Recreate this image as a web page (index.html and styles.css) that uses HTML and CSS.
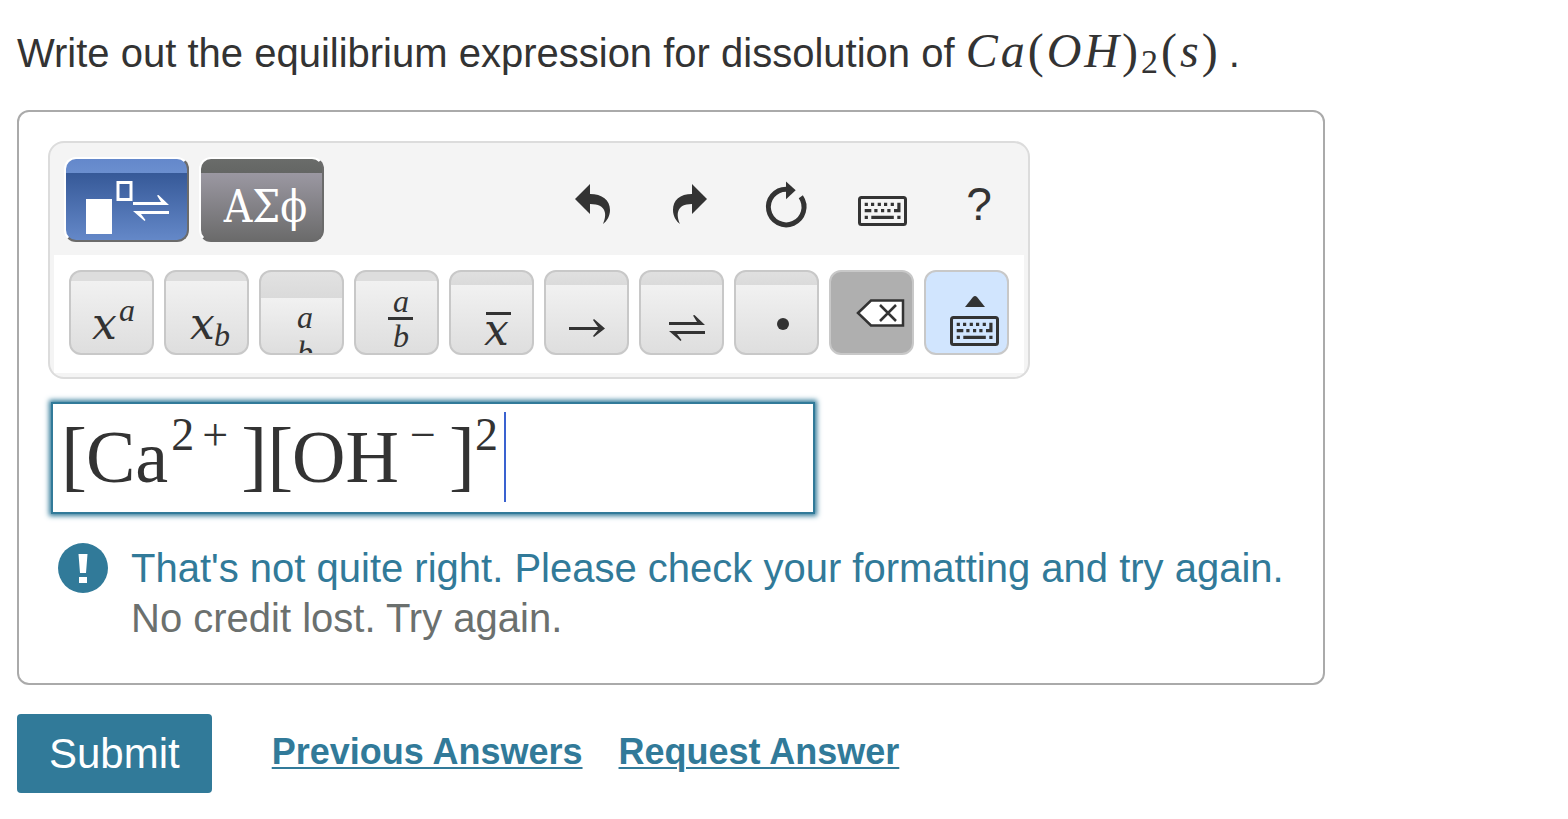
FILE: index.html
```html
<!DOCTYPE html>
<html lang="en">
<head>
    <meta charset="UTF-8">
    <meta name="viewport" content="width=device-width, initial-scale=1.0">
    <title>Equilibrium Expression</title>
    <link rel="stylesheet" href="styles.css">
</head>
<body>
    <!-- shared keyboard icon -->
    <svg class="defs" aria-hidden="true">
        <symbol id="keyboard" viewBox="0 0 49 30">
            <rect x="1.5" y="1.5" width="46" height="27" rx="2" fill="none" stroke="#333" stroke-width="3"/>
            <path fill="#333" d="M6.7 6.7h3.2v3.2h-3.2zM13 6.7h3.2v3.2H13zM19.7 6.7h3.2v3.2h-3.2zM26 6.7h3.2v3.2H26zM32.7 6.7h3.2v3.2h-3.2zM39.3 6.7h3.2v9.6H36v-3.2h3.3zM6.7 13.1h6.6v3.2H6.7zM16.3 13.1h3.2v3.2h-3.2zM23 13.1h3.2v3.2H23zM29.3 13.1h3.2v3.2h-3.2zM6.7 19.7h3.2v3.2H6.7zM13.3 19.7h22.5v3.2H13.3zM39.3 19.7h3.2v3.2h-3.2z"/>
        </symbol>
    </svg>

    <main class="problem">
        <p class="question">Write out the equilibrium expression for dissolution of <span class="formula"><i>C</i><i>a</i><span>(</span><i>O</i><i>H</i><span>)</span><sub>2</sub><span>(</span><i>s</i><span>)</span></span> .</p>

        <form id="answerForm">
            <div class="panel">
                <div class="toolbar">
                    <div class="toolbar-top">
                        <button type="button" class="tab tab-active" aria-label="Templates">
                            <svg viewBox="0 0 121 81">
                                <rect x="20" y="40" width="26" height="35" fill="#fff"/>
                                <rect x="52" y="23.500" width="13" height="17" fill="none" stroke="#fff" stroke-width="3"/>
                                <path fill="#fff" d="M67 46V43H95L91 36.500L92.500 36L103 46zM103 52V55H75L79.500 61L78.500 62L67 52z"/>
                            </svg>
                        </button>
                        <button type="button" class="tab" aria-label="Greek symbols"><span class="greek">ΑΣϕ</span></button>
                        <div class="tools">
                            <button type="button" class="tool" aria-label="Undo">
                                <svg viewBox="-3 0 96 84"><path fill="#333" d="M28 42L43 27V37C55 37 63 43 63 53C63 59 60 64 56 67C60 58 60 47 43 47V57Z"/></svg>
                            </button>
                            <button type="button" class="tool" aria-label="Redo">
                                <svg viewBox="-3 0 96 84"><path fill="#333" d="M64 42L49 27V37C37 37 30 43 30 53C30 59 33 64 37 67C33 58 33 47 49 47V57Z"/></svg>
                            </button>
                            <button type="button" class="tool" aria-label="Reset">
                                <svg viewBox="-3 0 96 84">
                                    <path fill="none" stroke="#333" stroke-width="5" d="M61.800 39.800A17.800 17.800 0 1 1 47.300 32.200"/>
                                    <path fill="#333" d="M47 24.500L56.700 33.300L47 42.300z"/>
                                </svg>
                            </button>
                            <button type="button" class="tool" aria-label="Keyboard shortcuts">
                                <svg viewBox="-3 0 96 84"><use href="#keyboard" x="23" y="39" width="49" height="30"/></svg>
                            </button>
                            <button type="button" class="tool" aria-label="Help"><span class="help">?</span></button>
                        </div>
                    </div>
                    <div class="keys">
                        <button type="button" class="key" aria-label="Superscript">
                            <svg viewBox="0 0 81 81"><text class="big" x="21" y="67">x</text><text class="small" x="48" y="49">a</text></svg>
                        </button>
                        <button type="button" class="key" aria-label="Subscript">
                            <svg viewBox="0 0 81 81"><text class="big" x="24" y="67">x</text><text class="small" x="48" y="74">b</text></svg>
                        </button>
                        <button type="button" class="key key-stack" aria-label="Stacked values">
                            <svg viewBox="0 0 81 81"><text class="small" x="36" y="56">a</text><text class="small" x="36" y="91">b</text></svg>
                        </button>
                        <button type="button" class="key" aria-label="Fraction">
                            <svg viewBox="0 0 81 81"><text class="small" x="37" y="40">a</text><rect x="32" y="45" width="25" height="3" fill="#333"/><text class="small" x="37" y="75">b</text></svg>
                        </button>
                        <button type="button" class="key key-low" aria-label="Overline">
                            <svg viewBox="0 0 81 81"><rect x="35" y="40" width="25" height="3" fill="#333"/><text class="big" x="33" y="73">x</text></svg>
                        </button>
                        <button type="button" class="key key-low" aria-label="Reaction arrow">
                            <svg viewBox="0 0 81 81"><path fill="#333" d="M23 55h29l-5-7 1-1 11 9.500L48 65l-1-1 5-6H23z"/></svg>
                        </button>
                        <button type="button" class="key key-low" aria-label="Equilibrium arrow">
                            <svg viewBox="0 0 81 81"><path fill="#333" d="M28 53V50H56L52 43.500L53.500 43L64 53zM64 59V62H36L40.500 68L39.500 69L28 59z"/></svg>
                        </button>
                        <button type="button" class="key key-low" aria-label="Dot">
                            <svg viewBox="0 0 81 81"><circle cx="47" cy="52" r="6" fill="#333"/></svg>
                        </button>
                        <button type="button" class="key key-delete" aria-label="Backspace">
                            <svg viewBox="0 0 81 81"><path fill="#fff" stroke="#333" stroke-width="2.500" d="M27 41L40 28.500H72V53.500H40z"/><path stroke="#333" stroke-width="2.500" d="M49 33L65 49M65 33L49 49"/></svg>
                        </button>
                        <button type="button" class="key key-toggle" aria-label="Toggle keyboard">
                            <svg viewBox="0 0 81 81"><path fill="#333" d="M39 35L47 25Q49 23 51 25L59 35z"/><use href="#keyboard" x="24" y="44" width="49" height="30"/></svg>
                        </button>
                    </div>
                </div>

                <div class="answer" role="textbox" tabindex="0" aria-label="Your answer"><span class="bracket bracket-first">[</span>Ca<sup class="charge">2<span class="plus">+</span></sup><span class="bracket">]</span><span class="bracket bracket-first">[</span>OH<sup class="charge"><span class="plus">−</span></sup><span class="bracket">]</span><sup>2</sup><span class="caret"></span></div>

                <div class="feedback">
                    <svg class="alert" viewBox="0 0 50 50">
                        <circle cx="25" cy="25" r="25" fill="#317a99"/>
                        <path fill="#fff" d="M20.500 11h9l-1.500 19h-6zM21 34h8v6h-8z"/>
                    </svg>
                    <div>
                        <p class="message">That's not quite right. Please check your formatting and try again.</p>
                        <p class="credit">No credit lost. Try again.</p>
                    </div>
                </div>
            </div>

            <div class="actions">
                <button type="submit" class="submit">Submit</button>
                <a href="#previous">Previous Answers</a>
                <a href="#request">Request Answer</a>
            </div>
        </form>
    </main>
    <script>
        document.getElementById("answerForm").addEventListener("submit", function(event) {
            event.preventDefault();
        });
    </script>
</body>
</html>
```
FILE: styles.css
```css
* {
    box-sizing: border-box;
}
body {
    font-family: "Liberation Sans", Arial, sans-serif;
    font-size: 40px;
    margin: 0;
    color: #333;
    background: white;
}
p {
    margin: 0;
}
button {
    font-family: inherit;
    padding: 0;
    border: none;
    cursor: pointer;
}
svg {
    display: block;
}
.defs {
    display: none;
}
.problem {
    max-width: 1342px;
    padding: 23px 17px;
}
.question {
    line-height: 60px;
    margin-bottom: 27px;
}
.formula {
    display: inline-flex;
    align-items: baseline;
    gap: 3px;
    font-family: "Liberation Serif", "Times New Roman", serif;
    font-size: 48px;
    line-height: 48px;
}
.formula sub {
    font-size: 34px;
    line-height: 34px;
    position: relative;
    top: 6px;
    vertical-align: baseline;
}
.panel {
    border: 2px solid #aaa;
    border-radius: 12px;
    padding: 29px 29px 40px;
}
.toolbar {
    width: fit-content;
    border: 2px solid #dcdcdc;
    border-radius: 16px;
    background: #f4f4f4;
    padding: 0 4px 4px;
}
.toolbar-top {
    display: flex;
    gap: 10px;
    height: 112px;
    padding: 14px 0 14px 10px;
}
.tab {
    width: 125px;
    height: 85px;
    border: 2px solid;
    border-color: white #6b6b6b #6b6b6b white;
    border-radius: 12px;
    overflow: hidden;
    color: white;
    background: linear-gradient(#6a6c6a, #646664) top / 100% 14px no-repeat, linear-gradient(#9b98a2 14px, #6b6b6b);
}
.tab-active {
    background: linear-gradient(#6488cb, #6b8fcf) top / 100% 14px no-repeat, linear-gradient(#365998 14px, #6488c8);
}
.greek {
    display: block;
    font-family: "DejaVu Serif Condensed", "DejaVu Serif", serif;
    font-size: 44px;
    line-height: 48px;
    padding: 14px 0 0 8px;
}
.tools {
    display: flex;
    margin-left: auto;
}
.tool {
    width: 96px;
    height: 84px;
    background: none;
    color: #333;
}
.help {
    display: block;
    font-size: 46px;
    line-height: 48px;
    padding: 10px 0 0 6px;
}
.keys {
    display: flex;
    gap: 10px;
    background: white;
    padding: 15px 15px 18px;
}
.key {
    width: 85px;
    height: 85px;
    border: 2px solid #c8c8c8;
    border-radius: 12px;
    overflow: hidden;
    background: linear-gradient(#ddd, #ddd) top / 100% 9px no-repeat, linear-gradient(#f1f1f1 9px, #dedede);
}
.key-low {
    background: linear-gradient(#e0e0e0, #dadada) top / 100% 13px no-repeat, linear-gradient(#f1f1f1 13px, #dedede);
}
.key-stack {
    background: linear-gradient(#e2e2e2, #dadada) top / 100% 26px no-repeat, linear-gradient(#f1f1f1 26px, #dedede);
}
.key-delete {
    background: #afafaf;
}
.key-toggle {
    background: #d1e5fe;
}
.key text {
    font-family: "Liberation Serif", "Times New Roman", serif;
    font-style: italic;
    fill: #333;
}
.key .big {
    font-family: "DejaVu Serif", serif;
    font-size: 44px;
}
.key .small {
    font-size: 32px;
}
.answer {
    display: flex;
    align-items: baseline;
    max-width: 764px;
    height: 112px;
    margin: 23px 3px 29px;
    padding: 8px;
    border: 2px solid #317a99;
    box-shadow: 0 0 5px 2px #317a99;
    outline: none;
    font-family: "Liberation Serif", "Times New Roman", serif;
    font-size: 74px;
    line-height: 88px;
}
.answer sup {
    font-size: 46px;
    line-height: 46px;
    position: relative;
    bottom: 32px;
    vertical-align: baseline;
}
.answer .charge {
    margin-left: 3px;
}
.bracket {
    font-size: 78px;
}
.bracket-first {
    margin-right: -1px;
}
.plus {
    padding: 0 13px 0 8px;
}
.caret {
    align-self: flex-start;
    width: 2px;
    height: 90px;
    margin-left: 6px;
    background: #3a62d0;
}
.feedback {
    display: flex;
    gap: 23px;
    padding-left: 10px;
    line-height: 50px;
}
.alert {
    flex: none;
    width: 50px;
    height: 50px;
}
.message {
    color: #317a99;
}
.credit {
    color: #6b706e;
}
.actions {
    display: flex;
    align-items: center;
    gap: 36px;
    margin-top: 29px;
}
.submit {
    padding: 0 32px;
    margin-right: 24px;
    font-size: 42px;
    line-height: 79px;
    color: white;
    background: #317a99;
    border-radius: 4px;
}
.actions a {
    padding-bottom: 4px;
    font-size: 36px;
    font-weight: bold;
    color: #317a99;
    text-decoration-thickness: 2px;
    text-underline-offset: 3px;
}
```
